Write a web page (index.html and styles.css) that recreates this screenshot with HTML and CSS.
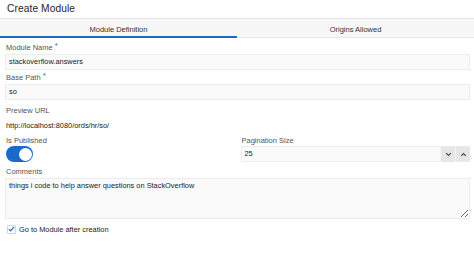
FILE: index.html
```html
<!DOCTYPE html>
<html>
<head>
<meta charset="utf-8">
<link rel="stylesheet" href="styles.css">
</head>
<body>
<div class="dialog">
  <div class="title">Create Module</div>
  <div class="tabs">
    <div class="tab active">Module Definition</div>
    <div class="tab">Origins Allowed</div>
  </div>
  <div class="form">
    <div class="field">
      <div class="label">Module Name <span class="req">*</span></div>
      <div class="input">stackoverflow.answers</div>
    </div>
    <div class="field">
      <div class="label">Base Path <span class="req">*</span></div>
      <div class="input">so</div>
    </div>
    <div class="field static">
      <div class="label">Preview URL</div>
      <div class="value">http://localhost:8080/ords/hr/so/</div>
    </div>
    <div class="row">
      <div class="field">
        <div class="label">Is Published</div>
        <div class="switch"><span class="knob"></span></div>
      </div>
      <div class="field">
        <div class="label">Pagination Size</div>
        <div class="input number">
          <span class="num">25</span>
          <span class="btn"><svg width="7" height="5" viewBox="0 0 7 5"><path d="M1.2 1.2l2.3 2.3 2.3-2.3" fill="none" stroke="#444" stroke-width="1.1"/></svg></span>
          <span class="btn"><svg width="7" height="5" viewBox="0 0 7 5"><path d="M1.2 3.8l2.3-2.3 2.3 2.3" fill="none" stroke="#444" stroke-width="1.1"/></svg></span>
        </div>
      </div>
    </div>
    <div class="field comments">
      <div class="label">Comments</div>
      <textarea class="textarea" readonly>things i code to help answer questions on StackOverflow</textarea>
    </div>
    <div class="check-row">
      <span class="checkbox"><svg width="8" height="8" viewBox="0 0 8 8"><path d="M1 4.2l2 2L7 1.5" fill="none" stroke="#1b6ac9" stroke-width="1.4"/></svg></span>
      <span class="check-label">Go to Module after creation</span>
    </div>
  </div>
</div>
</body>
</html>
```
FILE: styles.css
```css
* { box-sizing: border-box; }
html, body { margin: 0; padding: 0; background: #fff; }
body {
  font-family: "Liberation Sans", Arial, sans-serif;
  color: #333;
  width: 474px;
  height: 262px;
  overflow: hidden;
}
.dialog { display: flex; flex-direction: column; }
.title {
  height: 18px;
  line-height: 18px;
  padding-left: 7px;
  font-size: 10.2px;
  color: #262626;
  letter-spacing: 0.1px;
}
.tabs {
  display: grid;
  grid-template-columns: 1fr 1fr;
  height: 20px;
  border-top: 1px solid #e4e4e4;
  background: #f7f7f7;
}
.tab {
  display: flex;
  align-items: center;
  justify-content: center;
  font-size: 7.5px;
  color: #333;
  padding-top: 2px;
  border-bottom: 1px solid #e8e8e8;
}
.tab.active { border-bottom: 2px solid #1b6ac9; padding-top: 3px; }
.form {
  padding: 5px 4px 0 5px;
  display: flex;
  flex-direction: column;
}
.field { display: flex; flex-direction: column; }
.field + .field { margin-top: 3px; }
.label {
  font-size: 7.5px;
  line-height: 10px;
  color: #555;
  padding-left: 1px;
  margin-bottom: 1px;
}
.req { color: #1b6ac9; position: relative; top: -2px; }
.input {
  height: 16px;
  border: 1px solid #ececec;
  background: #fafafa;
  font-size: 7.4px;
  line-height: 14px;
  padding-left: 3px;
  color: #222;
}
.static { margin-top: 6px !important; }
.static .value { font-size: 7.4px; line-height: 10px; margin-top: 4px; padding-left: 1px; color: #222; }
.row {
  display: grid;
  grid-template-columns: 1fr 1fr;
  column-gap: 6px;
  margin-top: 5px;
}
.row .field + .field { margin-top: 0; }
.row .label { margin-bottom: 0; }
.switch {
  width: 27px;
  height: 16px;
  border-radius: 8px;
  background: #1b6ac9;
  margin-left: 1px;
  position: relative;
}
.knob {
  position: absolute;
  right: 1.5px;
  top: 1.5px;
  width: 13px;
  height: 13px;
  border-radius: 50%;
  background: #fff;
}
.number { display: flex; align-items: stretch; padding-left: 3px; padding-right: 0; border-right: 0; }
.number .num { flex: 1; }
.number .btn {
  width: 15px;
  background: #e6e6e6;
  display: flex;
  align-items: center;
  justify-content: center;
  border-left: 1px solid #f5f5f5;
}
.field.comments { margin-top: 5px; }
.textarea {
  display: block;
  width: 100%;
  height: 41px;
  border: 1px solid #ececec;
  background: #fafafa;
  font-family: "Liberation Sans", Arial, sans-serif;
  font-size: 7.4px;
  line-height: 10px;
  color: #222;
  padding: 2px 3px;
  margin: 0;
  outline: none;
}
.check-row {
  display: flex;
  align-items: center;
  margin-top: 5px;
  padding-left: 2px;
  height: 10px;
}
.checkbox {
  width: 9px;
  height: 9px;
  border: 1px solid #d4d4d4;
  border-radius: 1px;
  display: flex;
  align-items: center;
  justify-content: center;
  background: #fff;
}
.check-label { font-size: 7.4px; margin-left: 3px; color: #222; }
```
